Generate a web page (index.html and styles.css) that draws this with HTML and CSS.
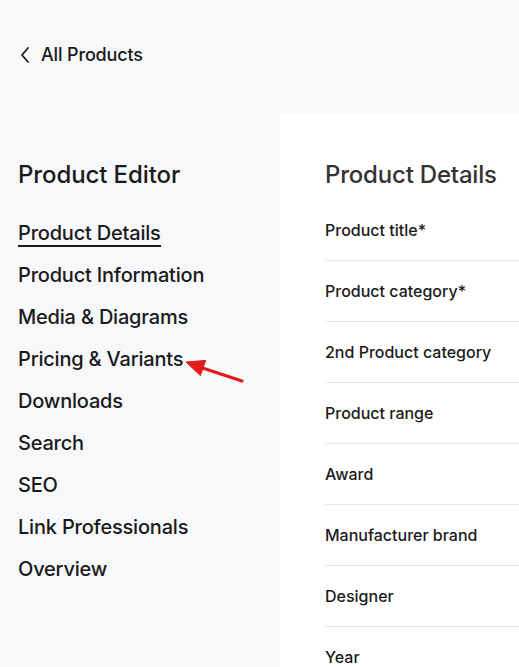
FILE: index.html
```html
<!DOCTYPE html>
<html>
<head>
<meta charset="utf-8">
<link rel="stylesheet" href="styles.css">
</head>
<body>
<div class="page">
  <header class="topbar">
    <a class="back" href="#">
      <svg class="chev" width="12" height="18" viewBox="0 0 12 18"><path d="M9 2 L3 9 L9 16" fill="none" stroke="#1a1a1a" stroke-width="1.8" stroke-linecap="round" stroke-linejoin="round"/></svg>
      <span>All Products</span>
    </a>
  </header>
  <div class="main">
    <aside class="sidebar">
      <h2 class="side-title">Product Editor</h2>
      <nav class="nav">
        <a class="nav-item active" href="#">Product Details</a>
        <a class="nav-item" href="#">Product Information</a>
        <a class="nav-item" href="#">Media &amp; Diagrams</a>
        <a class="nav-item arrow-host" href="#">Pricing &amp; Variants
          <svg class="arrow" width="62" height="36" viewBox="0 0 62 36"><path d="M57 31 L16 17.5" stroke="#e21b1b" stroke-width="3.2" stroke-linecap="round"/><path d="M1 12 L20.6 10.4 L15.4 25.6 Z" fill="#e21b1b" stroke="#e21b1b" stroke-width="1" stroke-linejoin="round"/></svg>
        </a>
        <a class="nav-item" href="#">Downloads</a>
        <a class="nav-item" href="#">Search</a>
        <a class="nav-item" href="#">SEO</a>
        <a class="nav-item" href="#">Link Professionals</a>
        <a class="nav-item" href="#">Overview</a>
      </nav>
    </aside>
    <section class="panel">
      <h2 class="panel-title">Product Details</h2>
      <div class="rows">
        <div class="row">Product title*</div>
        <div class="row">Product category*</div>
        <div class="row">2nd Product category</div>
        <div class="row">Product range</div>
        <div class="row">Award</div>
        <div class="row">Manufacturer brand</div>
        <div class="row">Designer</div>
        <div class="row">Year</div>
      </div>
    </section>
  </div>
</div>
</body>
</html>
```
FILE: styles.css
```css
* { box-sizing: border-box; }
html, body { margin: 0; padding: 0; }
body {
  background: #f7f8fa;
  font-family: Inter, "Noto Sans", sans-serif;
  color: #1a1a1a;
  overflow: hidden;
  height: 667px;
}
.page { display: flex; flex-direction: column; }
.topbar { height: 113px; padding: 44px 0 0 19px; }
.back {
  display: inline-flex; align-items: center; gap: 10px;
  color: #1a1a1a; text-decoration: none;
  font-size: 18px; font-weight: 500; line-height: 22px; letter-spacing: -0.15px;
}
.main { display: flex; }
.sidebar { width: 280px; flex: none; padding: 47px 0 0 18px; }
.side-title {
  margin: 0 0 31px; font-size: 24px; font-weight: 500; line-height: 30px; letter-spacing: -0.1px;
}
.nav { display: flex; flex-direction: column; align-items: flex-start; gap: 14px; }
.nav-item {
  color: #1a1a1a; text-decoration: none;
  font-size: 20px; font-weight: 500; line-height: 28px; letter-spacing: -0.2px;
  position: relative;
}
.nav-item.active { border-bottom: 2px solid #1a1a1a; line-height: 24px; }
.arrow { position: absolute; left: 100%; top: 5px; margin-left: 2px; }
.panel { flex: 1; background: #fff; padding: 47px 0 0 45px; min-height: 560px; }
.panel-title {
  margin: 0 0 20px; font-size: 24px; font-weight: 500; line-height: 30px; color: #333; letter-spacing: -0.2px;
}
.rows { display: flex; flex-direction: column; }
.row {
  height: 61px; display: flex; align-items: center;
  font-size: 16px; font-weight: 500; color: #1a1a1a;
  border-bottom: 1px solid #e6e6e6;
}
.row:first-child { height: 51px; align-items: flex-start; padding-top: 10px; line-height: 20px; }
```
